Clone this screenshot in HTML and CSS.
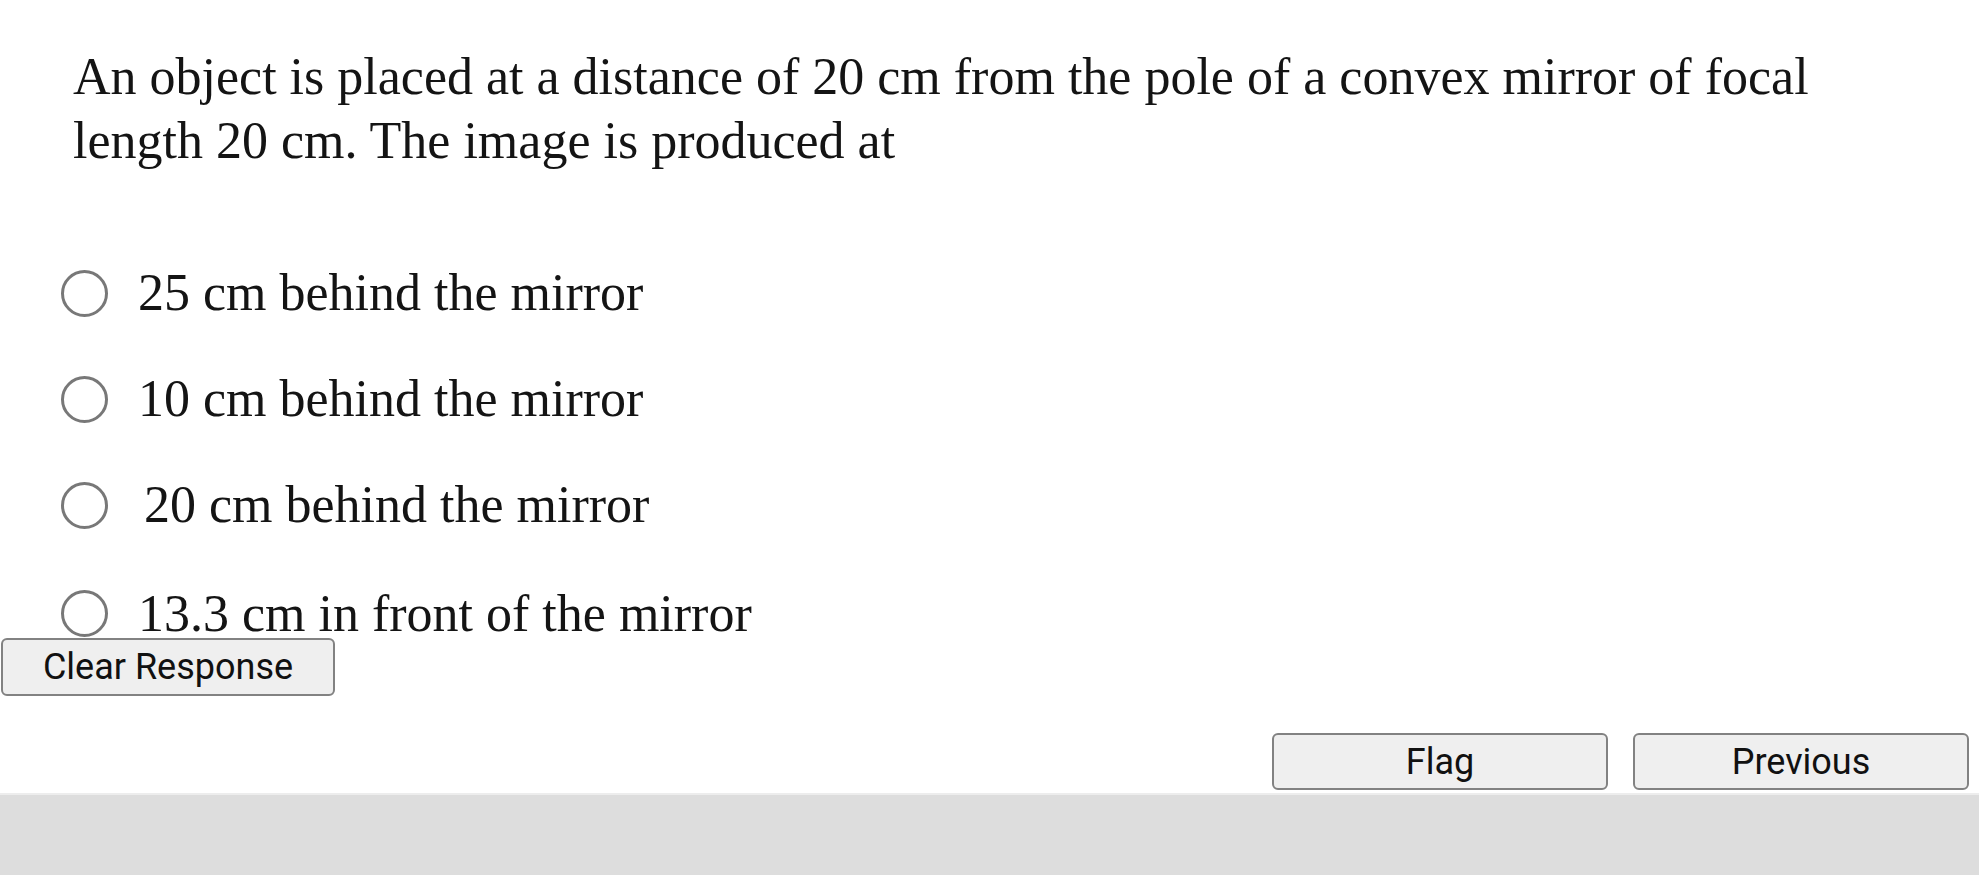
FILE: index.html
```html
<!DOCTYPE html>
<html>
    <head>
        <title>Question</title>
        <link rel="stylesheet" href="styles.css">
    </head>
    <body>
        <main>
            <div class="question">
                An object is placed at a distance of 20 cm from the pole of a convex mirror of focal<br>
                length 20 cm. The image is produced at
            </div>

            <div class="options">
                <label class="option">
                    <span class="radio"></span>
                    <span class="option_text">25 cm behind the mirror</span>
                </label>
                <label class="option">
                    <span class="radio"></span>
                    <span class="option_text">10 cm behind the mirror</span>
                </label>
                <label class="option">
                    <span class="radio"></span>
                    <span class="option_text shifted">20 cm behind the mirror</span>
                </label>
                <label class="option">
                    <span class="radio"></span>
                    <span class="option_text">13.3 cm in front of the mirror</span>
                </label>
            </div>

            <div class="clear_row">
                <button class="btn clear">Clear Response</button>
            </div>

            <div class="nav">
                <button class="btn">Flag</button>
                <button class="btn">Previous</button>
            </div>
        </main>
        <footer class="footer"></footer>
    </body>
</html>
```

FILE: styles.css
```css
* {
    box-sizing: border-box;
}

body {
    margin: 0;
    background: #fff;
    color: #141414;
    font-family: "Liberation Serif", "Times New Roman", serif;
}

.question {
    padding: 45px 0 0 73px;
    font-size: 52px;
    line-height: 64px;
}

.options {
    margin-top: 67px;
    height: 398px;
}

.option {
    display: flex;
    align-items: center;
    height: 106px;
    padding-left: 61px;
    font-size: 52px;
    line-height: 64px;
}

.option:nth-child(4) {
    height: 111px;
}

.radio {
    flex: none;
    width: 47px;
    height: 47px;
    border: 3px solid #787878;
    border-radius: 50%;
    background: #fff;
    margin-right: 30px;
}

.option_text.shifted {
    margin-left: 6px;
}

.btn {
    font-family: Roboto, "Liberation Sans", sans-serif;
    font-size: 36px;
    color: #111;
    background: #efefef;
    border: 2px solid #828282;
    border-radius: 6px;
    height: 57px;
    width: 336px;
    padding: 0;
    cursor: pointer;
}

.btn.clear {
    width: 334px;
    height: 58px;
    margin-left: 1px;
}

.nav {
    display: flex;
    justify-content: flex-end;
    gap: 25px;
    margin-top: 37px;
    padding-right: 10px;
}

.footer {
    margin-top: 3px;
    height: 83px;
    background: #dddddd;
    border-top: 2px solid #ededed;
}
```
